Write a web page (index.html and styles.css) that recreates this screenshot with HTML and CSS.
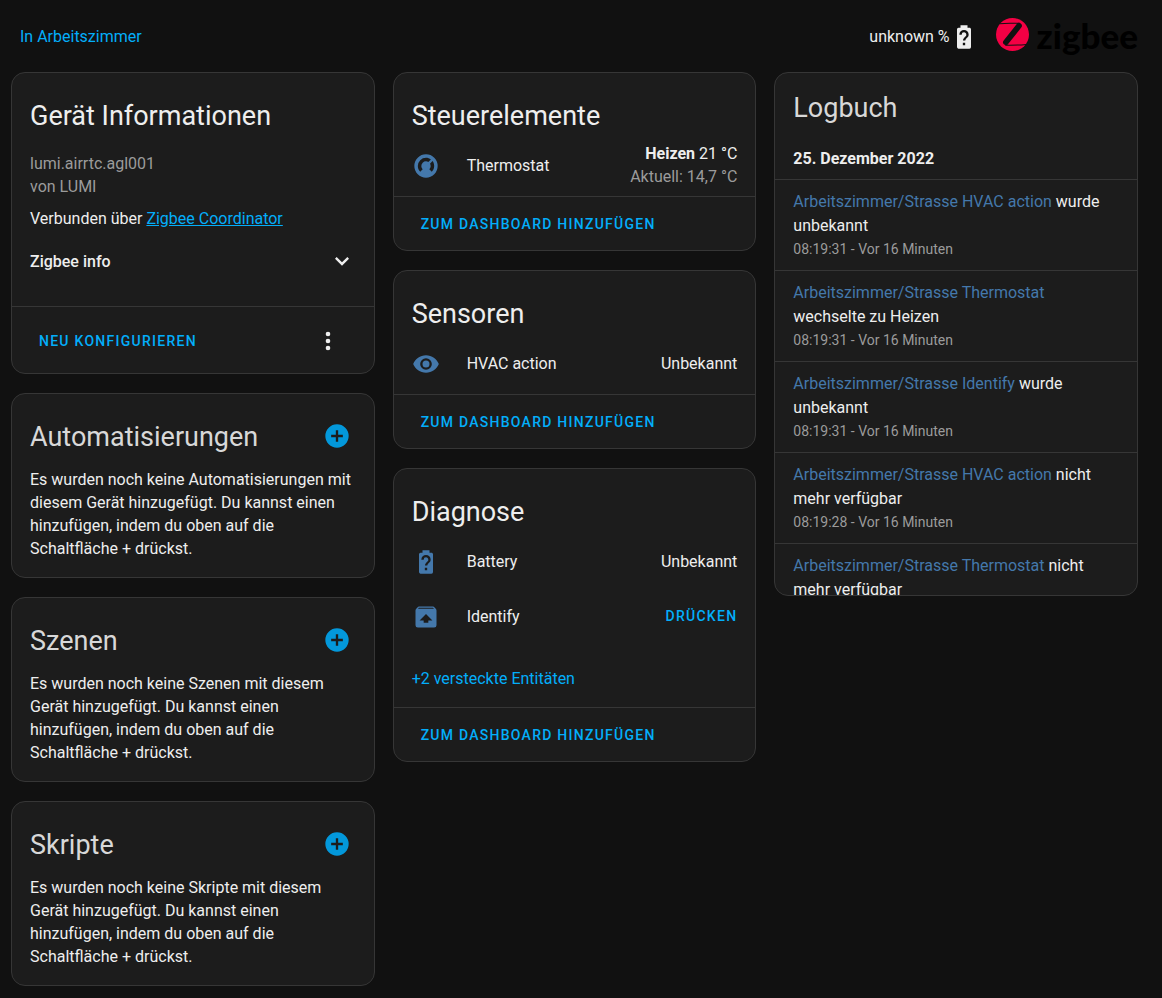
FILE: index.html
```html
<!DOCTYPE html>
<html lang="de">
<head>
<meta charset="utf-8">
<meta name="viewport" content="width=device-width, initial-scale=1">
<title>Arbeitszimmer/Strasse</title>
<link rel="stylesheet" href="styles.css">
</head>
<body>
<header class="topbar">
  <a class="link" href="#area">In Arbeitszimmer</a>
  <div class="topbar-right">
    <div class="battery">
      <span>unknown %</span>
      <svg class="icon" viewBox="0 0 24 24" aria-hidden="true"><path d="M15.07,12.25L14.17,13.17C13.63,13.71 13.25,14.18 13.09,15H11.05C11.16,14.1 11.56,13.28 12.17,12.67L13.41,11.41C13.78,11.05 14,10.55 14,10C14,8.89 13.1,8 12,8A2,2 0 0,0 10,10H8A4,4 0 0,1 12,6A4,4 0 0,1 16,10C16,10.88 15.64,11.68 15.07,12.25M13,19H11V17H13M16.67,4H15V2H9V4H7.33A1.33,1.33 0 0,0 6,5.33V20.66C6,21.4 6.6,22 7.33,22H16.67A1.33,1.33 0 0,0 18,20.66V5.33C18,4.59 17.4,4 16.67,4Z"/></svg>
    </div>
    <div class="logo">
      <svg class="logo-mark" viewBox="0 0 32 32" aria-hidden="true">
        <circle class="logo-disc" cx="16" cy="16" r="16"/>
        <path class="logo-thin" d="M3.500 5.600C9 4.700 15 4.900 23 5.200M9 26.300C16 26.400 23 26.300 29.500 25.600"/>
        <path class="logo-thick" d="M22.300 7.600L9.600 23.600"/>
      </svg>
      <span class="logo-word">zigbee</span>
    </div>
  </div>
</header>

<main class="columns">
  <div class="column">
    <section class="card">
      <h1 class="title">Gerät Informationen</h1>
      <div class="info">
        <p class="muted">lumi.airrtc.agl001<br>von LUMI</p>
        <p class="via">Verbunden über <a class="link underlined" href="#coordinator">Zigbee Coordinator</a></p>
        <button class="expander" type="button" aria-expanded="false">
          <span>Zigbee info</span>
          <svg class="icon" viewBox="0 0 24 24" aria-hidden="true"><path d="M7.41,8.58L12,13.17L16.59,8.58L18,10L12,16L6,10L7.41,8.58Z"/></svg>
        </button>
      </div>
      <div class="actions actions-tall">
        <button class="text-button" type="button">Neu konfigurieren</button>
        <button class="icon-button" type="button" aria-label="Menü">
          <svg class="icon" viewBox="0 0 24 24" aria-hidden="true"><path d="M12,16A2,2 0 0,1 14,18A2,2 0 0,1 12,20A2,2 0 0,1 10,18A2,2 0 0,1 12,16M12,10A2,2 0 0,1 14,12A2,2 0 0,1 12,14A2,2 0 0,1 10,12A2,2 0 0,1 12,10M12,4A2,2 0 0,1 14,6A2,2 0 0,1 12,8A2,2 0 0,1 10,6A2,2 0 0,1 12,4Z"/></svg>
        </button>
      </div>
    </section>

    <section class="card">
      <div class="title-row">
        <h2 class="title soft">Automatisierungen</h2>
        <button class="icon-button add" type="button" aria-label="Automatisierung hinzufügen"><svg class="icon" viewBox="0 0 24 24" aria-hidden="true"><path d="M17,13H13V17H11V13H7V11H11V7H13V11H17M12,2A10,10 0 0,0 2,12A10,10 0 0,0 12,22A10,10 0 0,0 22,12A10,10 0 0,0 12,2Z"/></svg></button>
      </div>
      <p class="empty">Es wurden noch keine Automatisierungen mit diesem Gerät hinzugefügt. Du kannst einen hinzufügen, indem du oben auf die Schaltfläche + drückst.</p>
    </section>

    <section class="card">
      <div class="title-row">
        <h2 class="title soft">Szenen</h2>
        <button class="icon-button add" type="button" aria-label="Szene hinzufügen"><svg class="icon" viewBox="0 0 24 24" aria-hidden="true"><path d="M17,13H13V17H11V13H7V11H11V7H13V11H17M12,2A10,10 0 0,0 2,12A10,10 0 0,0 12,22A10,10 0 0,0 22,12A10,10 0 0,0 12,2Z"/></svg></button>
      </div>
      <p class="empty">Es wurden noch keine Szenen mit diesem Gerät hinzugefügt. Du kannst einen hinzufügen, indem du oben auf die Schaltfläche + drückst.</p>
    </section>

    <section class="card">
      <div class="title-row">
        <h2 class="title soft">Skripte</h2>
        <button class="icon-button add" type="button" aria-label="Skript hinzufügen"><svg class="icon" viewBox="0 0 24 24" aria-hidden="true"><path d="M17,13H13V17H11V13H7V11H11V7H13V11H17M12,2A10,10 0 0,0 2,12A10,10 0 0,0 12,22A10,10 0 0,0 22,12A10,10 0 0,0 12,2Z"/></svg></button>
      </div>
      <p class="empty">Es wurden noch keine Skripte mit diesem Gerät hinzugefügt. Du kannst einen hinzufügen, indem du oben auf die Schaltfläche + drückst.</p>
    </section>
  </div>

  <div class="column">
    <section class="card">
      <h2 class="title">Steuerelemente</h2>
      <div class="entities">
        <div class="entity">
          <span class="badge"><svg class="icon" viewBox="0 0 24 24" aria-hidden="true"><path d="M16.95,16.95L14.83,14.83C15.55,14.1 16,13.1 16,12C16,11.26 15.79,10.57 15.43,10L17.6,7.81C18.5,9 19,10.43 19,12C19,13.93 18.22,15.68 16.95,16.95M12,5C13.57,5 15,5.5 16.19,6.4L14,8.56C13.43,8.21 12.74,8 12,8A4,4 0 0,0 8,12C8,13.1 8.45,14.1 9.17,14.83L7.05,16.95C5.78,15.68 5,13.93 5,12A7,7 0 0,1 12,5M12,2A10,10 0 0,0 2,12A10,10 0 0,0 12,22A10,10 0 0,0 22,12A10,10 0 0,0 12,2Z"/></svg></span>
          <span class="name">Thermostat</span>
          <span class="state"><strong>Heizen</strong> 21 °C<br><span class="muted">Aktuell: 14,7 °C</span></span>
        </div>
      </div>
      <div class="actions"><button class="text-button" type="button">Zum Dashboard hinzufügen</button></div>
    </section>

    <section class="card">
      <h2 class="title">Sensoren</h2>
      <div class="entities">
        <div class="entity">
          <span class="badge"><svg class="icon" viewBox="0 0 24 24" aria-hidden="true"><path d="M12,9A3,3 0 0,0 9,12A3,3 0 0,0 12,15A3,3 0 0,0 15,12A3,3 0 0,0 12,9M12,17A5,5 0 0,1 7,12A5,5 0 0,1 12,7A5,5 0 0,1 17,12A5,5 0 0,1 12,17M12,4.5C7,4.5 2.73,7.61 1,12C2.73,16.39 7,19.5 12,19.5C17,19.5 21.27,16.39 23,12C21.27,7.61 17,4.5 12,4.5Z"/></svg></span>
          <span class="name">HVAC action</span>
          <span class="state">Unbekannt</span>
        </div>
      </div>
      <div class="actions"><button class="text-button" type="button">Zum Dashboard hinzufügen</button></div>
    </section>

    <section class="card">
      <h2 class="title">Diagnose</h2>
      <div class="entities">
        <div class="entity">
          <span class="badge"><svg class="icon" viewBox="0 0 24 24" aria-hidden="true"><path d="M15.07,12.25L14.17,13.17C13.63,13.71 13.25,14.18 13.09,15H11.05C11.16,14.1 11.56,13.28 12.17,12.67L13.41,11.41C13.78,11.05 14,10.55 14,10C14,8.89 13.1,8 12,8A2,2 0 0,0 10,10H8A4,4 0 0,1 12,6A4,4 0 0,1 16,10C16,10.88 15.64,11.68 15.07,12.25M13,19H11V17H13M16.67,4H15V2H9V4H7.33A1.33,1.33 0 0,0 6,5.33V20.66C6,21.4 6.6,22 7.33,22H16.67A1.33,1.33 0 0,0 18,20.66V5.33C18,4.59 17.4,4 16.67,4Z"/></svg></span>
          <span class="name">Battery</span>
          <span class="state">Unbekannt</span>
        </div>
        <div class="entity">
          <span class="badge"><svg class="icon" viewBox="0 0 24 24" aria-hidden="true"><path fill-rule="evenodd" d="M20.54,5.23C20.83,5.57 21,6 21,6.5V19A2,2 0 0,1 19,21H5A2,2 0 0,1 3,19V6.5C3,6 3.17,5.57 3.46,5.23L4.84,3.55C5.12,3.21 5.53,3 6,3H18C18.47,3 18.88,3.21 19.15,3.55L20.54,5.23M5.12,5H18.87L17.93,4H5.93L5.12,5M12,9.5L6.5,15H10V17H14V15H17.5L12,9.5Z"/></svg></span>
          <span class="name">Identify</span>
          <button class="text-button press" type="button">Drücken</button>
        </div>
        <button class="more link" type="button">+2 versteckte Entitäten</button>
      </div>
      <div class="actions"><button class="text-button" type="button">Zum Dashboard hinzufügen</button></div>
    </section>
  </div>

  <div class="column">
    <section class="card logbook">
      <h2 class="title soft">Logbuch</h2>
      <div class="log" tabindex="0">
        <h3 class="date">25. Dezember 2022</h3>
        <div class="entry"><a class="entity-link" href="#hvac">Arbeitszimmer/Strasse HVAC action</a> wurde unbekannt<div class="time">08:19:31 - Vor 16 Minuten</div></div>
        <div class="entry"><a class="entity-link" href="#thermostat">Arbeitszimmer/Strasse Thermostat</a> wechselte zu Heizen<div class="time">08:19:31 - Vor 16 Minuten</div></div>
        <div class="entry"><a class="entity-link" href="#identify">Arbeitszimmer/Strasse Identify</a> wurde unbekannt<div class="time">08:19:31 - Vor 16 Minuten</div></div>
        <div class="entry"><a class="entity-link" href="#hvac">Arbeitszimmer/Strasse HVAC action</a> nicht mehr verfügbar<div class="time">08:19:28 - Vor 16 Minuten</div></div>
        <div class="entry"><a class="entity-link" href="#thermostat">Arbeitszimmer/Strasse Thermostat</a> nicht mehr verfügbar</div>
      </div>
    </section>
  </div>
</main>
</body>
</html>
```

FILE: styles.css
```css
:root {
  --page: #111111;
  --card: #1c1c1c;
  --line: #363636;
  --text: #eeeeee;
  --soft: #d8d8d8;
  --muted: #9b9b9b;
  --accent: #03aefa;
  --state: #4478ab;
}

* {
  box-sizing: border-box;
}

body {
  margin: 0;
  background: var(--page);
  color: var(--text);
  font: 16px/23px Roboto, "Noto Sans", sans-serif;
}

h1, h2, h3, p {
  margin: 0;
}

button {
  border: 0;
  padding: 0;
  background: none;
  color: inherit;
  font: inherit;
  cursor: pointer;
}

.icon {
  display: block;
  flex: none;
  width: 28px;
  height: 28px;
  fill: currentColor;
}

.link {
  color: var(--accent);
  text-decoration: none;
}

.underlined {
  text-decoration: underline;
}

.muted {
  color: var(--muted);
}

.topbar {
  display: flex;
  align-items: center;
  justify-content: space-between;
  height: 72px;
  padding: 1px 24px 0 20px;
}

.topbar-right {
  display: flex;
  align-items: center;
  gap: 18px;
}

.battery {
  display: flex;
  align-items: center;
}

.logo {
  display: flex;
  align-items: center;
  gap: 8px;
  padding-bottom: 4px;
}

.logo-mark {
  width: 33px;
  height: 33px;
}

.logo-disc {
  fill: #f40044;
}

.logo-thin {
  fill: none;
  stroke: var(--page);
  stroke-width: 1;
}

.logo-thick {
  fill: none;
  stroke: var(--page);
  stroke-width: 5.5;
  stroke-linecap: round;
}

.logo-word {
  color: #000000;
  font: 900 35px/40px Lato, sans-serif;
}

.columns {
  display: grid;
  grid-template-columns: repeat(3, minmax(0, 1fr));
  align-items: start;
  gap: 18px;
  padding: 0 24px 12px 11px;
}

.column {
  display: flex;
  flex-direction: column;
  gap: 19px;
}

.card {
  overflow: hidden;
  border: 1px solid var(--line);
  border-radius: 14px;
  background: var(--card);
}

.title {
  padding: 17px 18px 0;
  font-size: 27px;
  font-weight: 400;
  line-height: 52px;
}

.soft {
  color: var(--soft);
}

.info {
  padding: 10px 18px 13px;
}

.via {
  margin-top: 9px;
}

.expander {
  display: flex;
  align-items: center;
  justify-content: space-between;
  width: 100%;
  padding: 17px 0 18px;
  font-weight: 500;
}

.actions {
  display: flex;
  align-items: center;
  justify-content: space-between;
  min-height: 54px;
  padding: 2px 18px 0;
  border-top: 1px solid var(--line);
}

.actions-tall {
  min-height: 67px;
}

.actions .text-button {
  padding: 9px;
}

.text-button {
  color: var(--accent);
  font-size: 14px;
  font-weight: 500;
  line-height: 23px;
  letter-spacing: 0.09em;
  text-transform: uppercase;
}

.icon-button {
  margin-right: 14px;
}

.title-row {
  display: flex;
  align-items: center;
  justify-content: space-between;
}

.add {
  margin-right: 23px;
  padding-top: 15px;
  color: #0398db;
}

.empty {
  padding: 5px 18px 17px;
}

.entities {
  padding: 0 18px 8px 9px;
}

.entity {
  display: grid;
  grid-template-columns: 46px 1fr auto;
  align-items: center;
  min-height: 46px;
}

.entity + .entity {
  margin-top: 9px;
}

.badge {
  display: grid;
  place-items: center;
  padding-top: 2px;
  color: var(--state);
}

.name {
  padding-left: 18px;
}

.state {
  text-align: right;
}

.more {
  margin: 28px 9px 9px;
}

.logbook {
  display: flex;
  flex-direction: column;
}

.logbook .title {
  padding-top: 9px;
}

.log {
  height: 461px;
  overflow: hidden;
}

.date {
  padding: 13px 18px 9px;
  font-size: 16px;
  font-weight: 700;
  line-height: 23px;
}

.entry {
  padding: 10px 18px;
  border-top: 1px solid var(--line);
  line-height: 24px;
}

.entity-link {
  color: var(--state);
  text-decoration: none;
}

.time {
  color: var(--muted);
  font-size: 14px;
  line-height: 22px;
}
```
